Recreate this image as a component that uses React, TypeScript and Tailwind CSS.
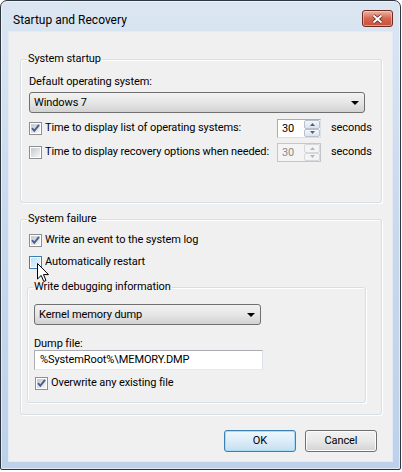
type BoxProps = { checked?: boolean; hover?: boolean };

function CheckBox({ checked, hover }: BoxProps) {
  return (
    <span
      className={`relative flex h-[13px] w-[13px] shrink-0 items-center justify-center border bg-white ${
        hover ? "border-[#3c7fb1]" : "border-[#8e8f8f]"
      }`}
    >
      <span
        className={`h-[9px] w-[9px] bg-gradient-to-br ${
          hover ? "from-[#b9e1fc] to-[#eaf6fe]" : "from-[#c4c8ce] to-[#f7f7f7]"
        }`}
      />
      {checked && (
        <svg className="absolute left-0 top-0" width="11" height="11" viewBox="0 0 11 11">
          <path d="M2 5.2 L4.3 7.8 L9 1.8" fill="none" stroke="#4a5d8e" strokeWidth="2" />
        </svg>
      )}
    </span>
  );
}

function DropDown({ label, width }: { label: string; width: string }) {
  return (
    <div
      className={`flex h-[21px] items-center justify-between rounded-[3px] border border-[#707070] bg-gradient-to-b from-[#f2f2f2] via-[#e6e6e6] to-[#d2d2d2] pl-[4px] pr-[5px] ${width}`}
    >
      <span className="leading-[14px]">{label}</span>
      <svg width="8" height="4" viewBox="0 0 8 4">
        <polygon points="0,0 8,0 4,4" fill="#000" />
      </svg>
    </div>
  );
}

function Spinner({ disabled }: { disabled?: boolean }) {
  const arrow = disabled ? "#b3b7bd" : "#4d6185";
  return (
    <div
      className={`flex h-[19px] w-[44px] border ${
        disabled ? "border-[#c3c6ca] bg-[#f4f4f4] text-[#8a8a8a]" : "border-[#abadb3] border-b-[#dbdfe6] border-r-[#dbdfe6] bg-white"
      }`}
    >
      <span className="flex-1 pl-[4px] leading-[17px]">30</span>
      <div className="flex w-[16px] flex-col">
        <div
          className={`flex flex-1 items-center justify-center rounded-[2px] border ${
            disabled ? "border-[#d5d8dc] bg-[#f4f4f4]" : "border-[#b7c0cc] bg-gradient-to-b from-[#f4f7fb] to-[#dce3ec]"
          }`}
        >
          <svg width="5" height="3" viewBox="0 0 5 3">
            <polygon points="0,3 5,3 2.5,0" fill={arrow} />
          </svg>
        </div>
        <div
          className={`flex flex-1 items-center justify-center rounded-[2px] border ${
            disabled ? "border-[#d5d8dc] bg-[#f4f4f4]" : "border-[#b7c0cc] bg-gradient-to-b from-[#f4f7fb] to-[#dce3ec]"
          }`}
        >
          <svg width="5" height="3" viewBox="0 0 5 3">
            <polygon points="0,0 5,0 2.5,3" fill={arrow} />
          </svg>
        </div>
      </div>
    </div>
  );
}

function WinButton({ label, primary }: { label: string; primary?: boolean }) {
  return (
    <div
      className={`flex h-[22px] w-[72px] items-center justify-center rounded-[3px] border ${
        primary
          ? "border-[#3c7fb1] bg-gradient-to-b from-[#eef7fd] via-[#dcecf8] to-[#c6def0] shadow-[inset_0_0_0_1px_#a9dbf6]"
          : "border-[#707070] bg-gradient-to-b from-[#f2f2f2] via-[#e8e8e8] to-[#d3d3d3] shadow-[inset_0_0_0_1px_#fcfcfc]"
      }`}
    >
      {label}
    </div>
  );
}

const groupBox = "rounded-[3px] border border-[#d5dfe5] shadow-[inset_1px_1px_0_#fff,1px_1px_0_#fff]";

export default function App() {
  return (
    <div className="relative h-[472px] w-[402px] bg-white font-['Roboto',sans-serif] text-[11px] tracking-[-0.1px] text-black">
      {/* window frame */}
      <div className="flex h-[470px] w-[401px] flex-col rounded-t-[7px] rounded-b-[2px] border border-[#2e3640] bg-gradient-to-b from-[#dbe6f2] via-[#c8d9ec] to-[#bdd1ea] px-[7px] pb-[7px] shadow-[inset_0_0_0_1px_rgba(255,255,255,0.55)]">
        {/* title bar */}
        <div className="flex h-[30px] items-start justify-between">
          <span className="ml-[5px] mt-[12px] text-[12px] leading-[14px] tracking-normal">Startup and Recovery</span>
          <div className="mt-[9px] flex h-[17px] w-[31px] items-center justify-center rounded-[3px] border border-[#6e2b20] bg-gradient-to-b from-[#eab5a8] via-[#d4664f] to-[#c8513b] shadow-[inset_0_0_0_1px_rgba(255,220,210,0.5)]">
            <svg width="13" height="10" viewBox="0 0 13 10">
              <path d="M2.5 1.5 L10.5 8.5 M10.5 1.5 L2.5 8.5" stroke="#5a2418" strokeWidth="3.6" />
              <path d="M2.5 1.5 L10.5 8.5 M10.5 1.5 L2.5 8.5" stroke="#ffffff" strokeWidth="2" />
            </svg>
          </div>
        </div>

        {/* client area */}
        <div className="flex h-[431px] flex-col border border-[#e2eaf4] bg-[#f0f0f0]">
          {/* System startup */}
          <fieldset className={`ml-[11px] mt-[20px] w-[362px] pb-[40px] pl-[8px] pt-[9px] ${groupBox}`}>
            <legend className="-ml-[2px] px-[1px] leading-[14px]">System startup</legend>
            <div className="leading-[14px]">Default operating system:</div>
            <DropDown label="Windows 7" width="mt-[3px] w-[336px]" />
            <div className="mt-[6px] flex h-[19px] items-center">
              <div className="flex w-[248px] items-center gap-[3px]">
                <CheckBox checked />
                <span>Time to display list of operating systems:</span>
              </div>
              <Spinner />
              <span className="ml-[10px]">seconds</span>
            </div>
            <div className="mt-[5px] flex h-[19px] items-center">
              <div className="flex w-[248px] items-center gap-[3px]">
                <CheckBox />
                <span>Time to display recovery options when needed:</span>
              </div>
              <Spinner disabled />
              <span className="ml-[10px]">seconds</span>
            </div>
          </fieldset>

          {/* System failure */}
          <fieldset className={`ml-[11px] mt-[9px] w-[362px] pb-[11px] pl-[8px] pt-[6px] ${groupBox}`}>
            <legend className="-ml-[2px] px-[1px] leading-[14px]">System failure</legend>
            <div className="flex h-[17px] items-center gap-[3px]">
              <CheckBox checked />
              <span>Write an event to the system log</span>
            </div>
            <div className="mt-[5px] flex h-[17px] items-center gap-[3px]">
              <CheckBox hover />
              <span>Automatically restart</span>
            </div>

            <fieldset className={`-ml-[2px] mt-[9px] w-[339px] pb-[10px] pl-[6px] pt-[10px] ${groupBox}`}>
              <legend className="-ml-px px-px leading-[14px]">Write debugging information</legend>
              <DropDown label="Kernel memory dump" width="w-[227px]" />
              <div className="mt-[12px] leading-[13px]">Dump file:</div>
              <div className="flex h-[20px] w-[229px] items-center border border-[#abadb3] border-b-[#e3e9ef] border-r-[#dbdfe6] bg-white pl-[5px]">
                %SystemRoot%\MEMORY.DMP
              </div>
              <div className="ml-px mt-[5px] flex h-[17px] items-center gap-[3px]">
                <CheckBox checked />
                <span>Overwrite any existing file</span>
              </div>
            </fieldset>
          </fieldset>

          <div className="mr-[15px] mt-[15px] flex justify-end gap-[9px]">
            <WinButton label="OK" primary />
            <WinButton label="Cancel" />
          </div>
        </div>
      </div>

      {/* mouse pointer */}
      <svg className="absolute left-[37px] top-[263px]" width="13" height="20" viewBox="0 0 13 20">
        <path
          d="M0.5 0.5 L0.5 16 L4.2 12.4 L6.8 18.5 L9 17.6 L6.5 11.6 L11.5 11.6 Z"
          fill="#fff"
          stroke="#000"
          strokeWidth="1"
          strokeLinejoin="miter"
        />
      </svg>
    </div>
  );
}
